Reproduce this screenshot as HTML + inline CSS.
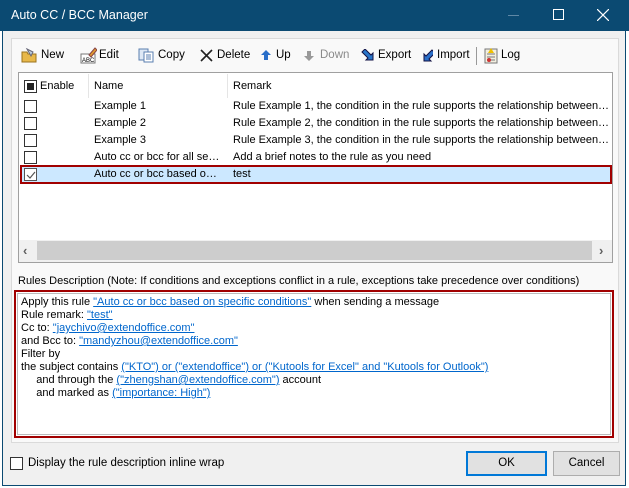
<!DOCTYPE html>
<html><head><style>
*{margin:0;padding:0;box-sizing:border-box}
body{width:629px;height:488px;background:#fff;font-family:"Liberation Sans",sans-serif;font-size:11px;color:#000;position:relative;overflow:hidden}
.win{position:absolute;left:2px;top:0;width:624px;height:486px;background:#f0f0f0;border:1px solid #0b4a72;border-top:none}
.title{position:absolute;left:0;top:0;width:629px;height:31px;background:#0b4a72;color:#fff;font-size:12.5px}
.t{position:absolute;white-space:nowrap}
.panel{position:absolute;left:11px;top:38px;width:608px;height:405px;background:#f9f9f9;border:1px solid #dadada}
.list{position:absolute;left:18px;top:72px;width:595px;height:191px;background:#fff;border:1px solid #a0a0a0}
.cb{position:absolute;width:13px;height:13px;border:1px solid #333;background:#fff}
.lnk{color:#0066cc;text-decoration:underline}
.btn{position:absolute;height:25px;background:#e1e1e1;border:1px solid #adadad;text-align:center;line-height:23px;font-size:11.5px}
.tb{position:absolute;top:49px;white-space:nowrap;font-size:11.5px}
.desc div{height:13px;line-height:13px;white-space:nowrap}
</style></head><body>
<div class="win"></div>
<div class="title"><span class="t" style="left:11px;top:8px">Auto CC / BCC Manager</span>
<div style="position:absolute;left:508px;top:15px;width:11px;height:1px;background:#5f88a6"></div>
<div style="position:absolute;left:553px;top:9px;width:11px;height:11px;border:1px solid #fff"></div>
<svg style="position:absolute;left:597px;top:9px" width="12" height="12"><path d="M0 0L12 12M12 0L0 12" stroke="#fff" stroke-width="1.2"/></svg>
</div>
<div class="panel"></div>
<svg style="position:absolute;left:21px;top:47px" width="17" height="16"><path d="M1 5h5l1 2h8v8H1z" fill="#e8b84a" stroke="#9a7420"/><path d="M6 2l6 3-2 4z" fill="#bcd" stroke="#667"/></svg>
<span class="tb" style="left:41px">New</span>
<svg style="position:absolute;left:80px;top:47px" width="17" height="17"><rect x="1" y="7" width="14" height="9" fill="#fff" stroke="#777"/><text x="2" y="15" font-size="6" font-family="Liberation Sans">ABC</text><path d="M9 8l6-7 2 2-6 7z" fill="#e09a30" stroke="#844"/></svg>
<span class="tb" style="left:99px">Edit</span>
<svg style="position:absolute;left:138px;top:48px" width="17" height="15"><rect x="1" y="1" width="9" height="11" fill="#dde8f5" stroke="#5a7fb0"/><rect x="6" y="4" width="9" height="10" fill="#fff" stroke="#5a7fb0"/><path d="M8 7h5M8 9h5M8 11h5" stroke="#5a7fb0"/></svg>
<span class="tb" style="left:158px">Copy</span>
<svg style="position:absolute;left:200px;top:49px" width="13" height="13"><path d="M1 1L12 12M12 1L1 12" stroke="#222" stroke-width="1.6"/></svg>
<span class="tb" style="left:217px">Delete</span>
<svg style="position:absolute;left:261px;top:50px" width="10" height="11"><path d="M5 0L10 5H7v5H3V5H0z" fill="#2a6fc9"/></svg>
<span class="tb" style="left:276px">Up</span>
<svg style="position:absolute;left:304px;top:50px" width="10" height="11"><path d="M5 11L10 6H7V1H3v5H0z" fill="#999"/></svg>
<span class="tb" style="left:320px;color:#8a8a8a">Down</span>
<svg style="position:absolute;left:361px;top:49px" width="13" height="13"><path d="M1 3l6 6-2 2h7V4l-2 2-6-6z" fill="#2a76c9" stroke="#114"/></svg>
<span class="tb" style="left:378px">Export</span>
<svg style="position:absolute;left:420px;top:49px" width="13" height="13"><path d="M12 1L6 7 4 5v7h7l-2-2 6-6z" fill="#2a6fc9" stroke="#114"/></svg>
<span class="tb" style="left:437px">Import</span>
<div style="position:absolute;left:476px;top:47px;width:1px;height:18px;background:#999"></div>
<svg style="position:absolute;left:484px;top:47px" width="14" height="17"><rect x="1" y="2" width="12" height="14" fill="#f3efe0" stroke="#777"/><path d="M3 7h8M3 10h8M3 13h8" stroke="#777"/><path d="M7 1l3 5H4z" fill="#f0c000"/><circle cx="5" cy="13" r="2" fill="#c33"/></svg>
<span class="tb" style="left:501px">Log</span>
<div class="list"></div>
<div style="position:absolute;left:88px;top:74px;width:1px;height:24px;background:#e5e5e5"></div>
<div style="position:absolute;left:227px;top:74px;width:1px;height:24px;background:#e5e5e5"></div>
<div class="cb" style="left:24px;top:80px"><div style="position:absolute;left:2px;top:2px;width:7px;height:7px;background:#222"></div></div>
<span class="t" style="left:40px;top:80px">Enable</span>
<span class="t" style="left:94px;top:80px">Name</span>
<span class="t" style="left:233px;top:80px">Remark</span>
<div class="cb" style="left:24px;top:100px"></div><span class="t" style="left:94px;top:100px">Example 1</span><span class="t" style="left:233px;top:100px">Rule Example 1, the condition in the rule supports the relationship between…</span>
<div class="cb" style="left:24px;top:117px"></div><span class="t" style="left:94px;top:117px">Example 2</span><span class="t" style="left:233px;top:117px">Rule Example 2, the condition in the rule supports the relationship between…</span>
<div class="cb" style="left:24px;top:134px"></div><span class="t" style="left:94px;top:134px">Example 3</span><span class="t" style="left:233px;top:134px">Rule Example 3, the condition in the rule supports the relationship between…</span>
<div class="cb" style="left:24px;top:151px"></div><span class="t" style="left:94px;top:151px">Auto cc or bcc for all se…</span><span class="t" style="left:233px;top:151px">Add a brief notes to the rule as you need</span>
<div style="position:absolute;left:20px;top:165px;width:592px;height:19px;background:#cce8ff;border:2px solid #a10000"></div>
<div class="cb" style="left:24px;top:168px;border-color:#555"><svg width="11" height="11" style="position:absolute;left:0;top:0"><path d="M2 6l3 3 5-6" stroke="#555" fill="none" stroke-width="1.2"/></svg></div>
<span class="t" style="left:94px;top:168px">Auto cc or bcc based o…</span><span class="t" style="left:233px;top:168px">test</span>
<div style="position:absolute;left:19px;top:240px;width:593px;height:22px;background:#f0f0f0"></div>
<div style="position:absolute;left:37px;top:241px;width:555px;height:19px;background:#cdcdcd"></div>
<span class="t" style="left:23px;top:243px;color:#606060;font-weight:bold;font-size:13px">‹</span>
<span class="t" style="left:599px;top:243px;color:#606060;font-weight:bold;font-size:13px">›</span>
<span class="t" style="left:18px;top:275px">Rules Description (Note: If conditions and exceptions conflict in a rule, exceptions take precedence over conditions)</span>
<div style="position:absolute;left:14px;top:290px;width:600px;height:148px;border:2px solid #a10000;background:#fff"></div>
<div style="position:absolute;left:17px;top:293px;width:594px;height:142px;border:1px solid #bbb"></div>
<div class="desc" style="position:absolute;left:21px;top:296px">
<div>Apply this rule <span class="lnk">"Auto cc or bcc based on specific conditions"</span> when sending a message</div>
<div>Rule remark: <span class="lnk">"test"</span></div>
<div>Cc to: <span class="lnk">"jaychivo@extendoffice.com"</span></div>
<div>and Bcc to: <span class="lnk">"mandyzhou@extendoffice.com"</span></div>
<div>Filter by</div>
<div>the subject contains <span class="lnk">("KTO") or ("extendoffice") or ("Kutools for Excel" and "Kutools for Outlook")</span></div>
<div>&nbsp;&nbsp;&nbsp;&nbsp;&nbsp;and through the <span class="lnk">("zhengshan@extendoffice.com")</span> account</div>
<div>&nbsp;&nbsp;&nbsp;&nbsp;&nbsp;and marked as <span class="lnk">("importance: High")</span></div>
</div>
<div class="cb" style="left:10px;top:457px;width:13px;height:13px"></div>
<span class="t" style="left:28px;top:457px;font-size:11.5px">Display the rule description inline wrap</span>
<div class="btn" style="left:466px;top:451px;width:81px;border:2px solid #0078d7;line-height:21px">OK</div>
<div class="btn" style="left:553px;top:451px;width:67px">Cancel</div>
</body></html>
